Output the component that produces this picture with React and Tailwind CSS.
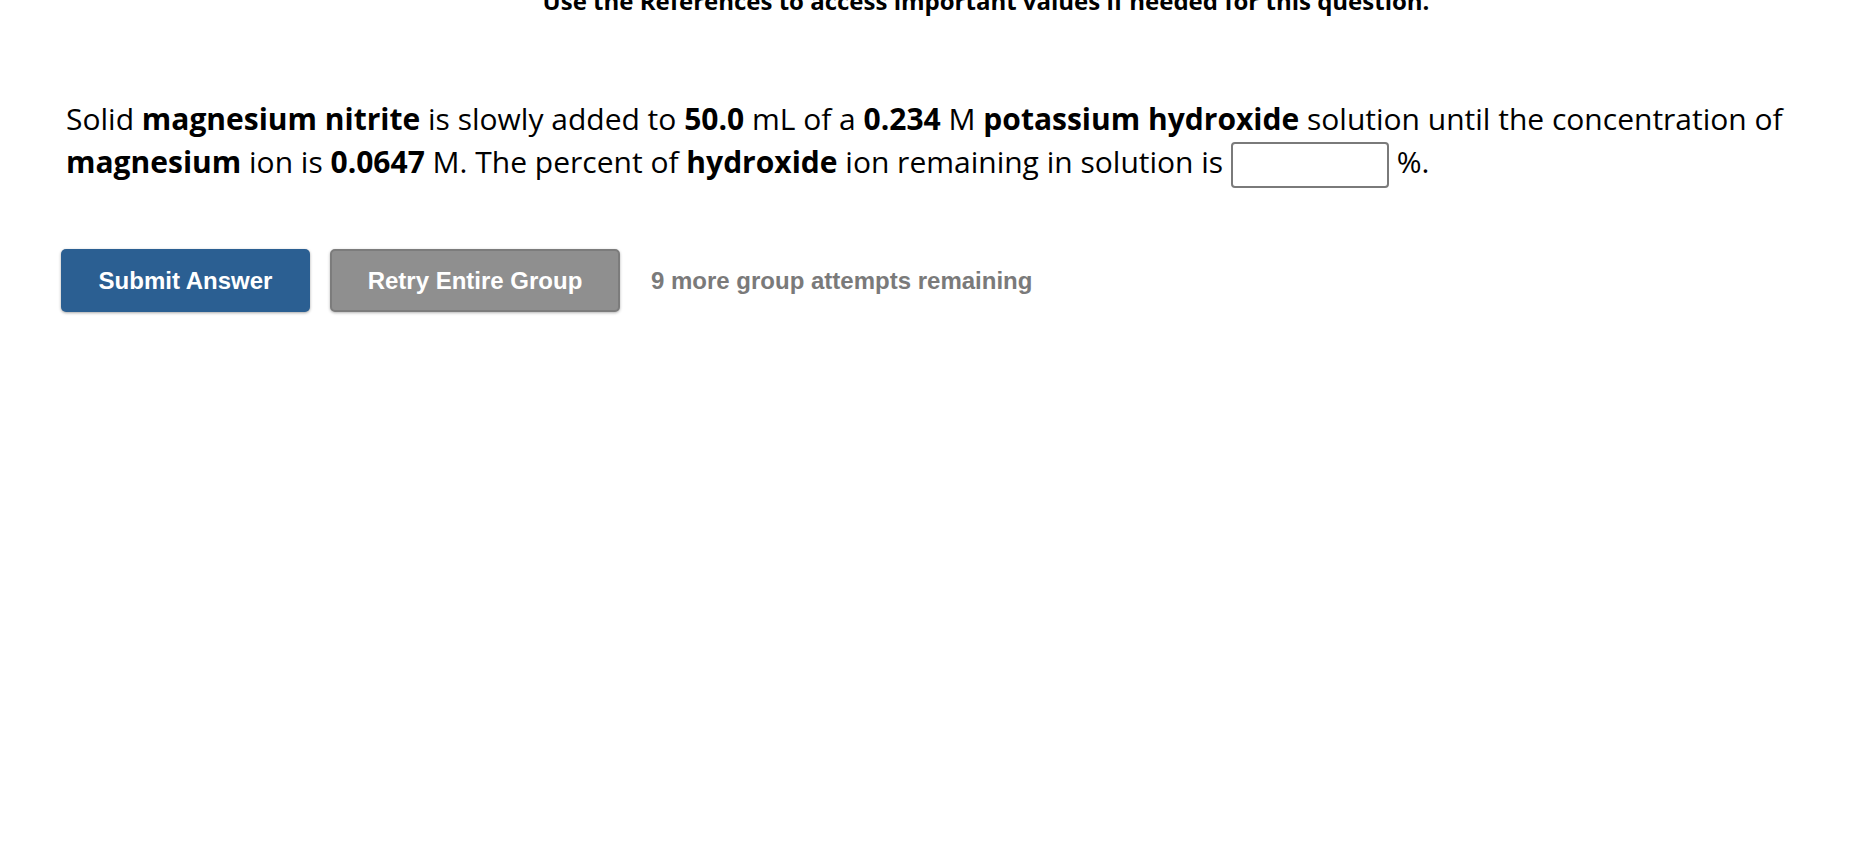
export default function App() {
  return (
    <div className="h-[862px] w-full overflow-hidden bg-white text-black" style={{ fontFamily: '"Open Sans", sans-serif' }}>
      {/* Header note, partly scrolled off the top */}
      <div className="-mt-[15px] h-[32px] pl-[100px] text-center text-[24px] font-bold leading-[32px] whitespace-nowrap">
        Use the References to access important values if needed for this question.
      </div>

      {/* Question */}
      <div className="mt-[80px] h-[86px] pl-[66px] text-[30px] leading-[43px] whitespace-nowrap">
        Solid <b>magnesium nitrite</b> is slowly added to <b>50.0</b> mL of a <b>0.234</b> M <b>potassium hydroxide</b> solution until the concentration of
        <br />
        <b>magnesium</b> ion is <b>0.0647</b> M. The percent of <b>hydroxide</b> ion remaining in solution is{' '}
        <input
          type="text"
          className="inline-block h-[46px] w-[158px] rounded-[4px] border-2 border-[#7a7a7a] bg-white align-middle outline-none"
        />{' '}
        %.
      </div>

      {/* Actions */}
      <div
        className="mt-[66px] flex items-center pl-[61px] text-[24px] font-bold"
        style={{ fontFamily: '"Liberation Sans", Arial, sans-serif' }}
      >
        <button className="h-[63px] w-[249px] rounded-[5px] bg-[#2b5f92] text-white shadow-[0_1px_3px_rgba(0,0,0,0.35)]">
          Submit Answer
        </button>
        <button className="ml-[20px] h-[63px] w-[290px] rounded-[5px] border-2 border-[#7c7c7c] bg-[#8f8f8f] text-white shadow-[0_1px_3px_rgba(0,0,0,0.3)]">
          Retry Entire Group
        </button>
        <span className="ml-[31px] text-[#7a7a7a]">9 more group attempts remaining</span>
      </div>
    </div>
  );
}
